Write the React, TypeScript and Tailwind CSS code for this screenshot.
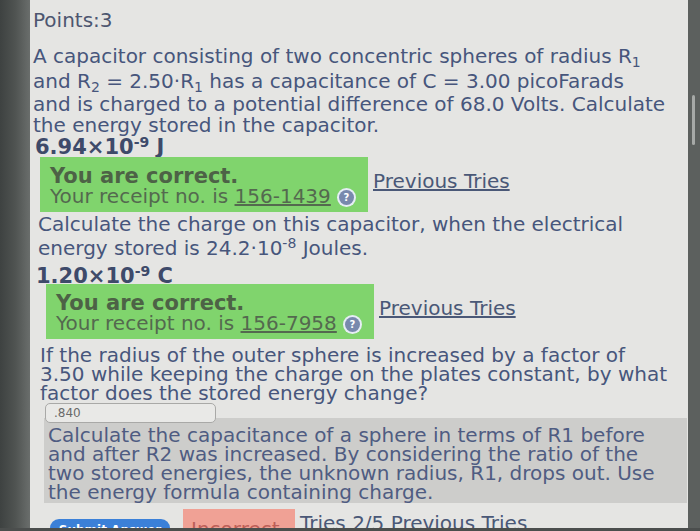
import React from 'react';

const font = { fontFamily: '"DejaVu Sans", Verdana, sans-serif' };

const Sub: React.FC<{ children: React.ReactNode }> = ({ children }) => (
  <sub className="text-[14px] leading-none">{children}</sub>
);

const Sup: React.FC<{ children: React.ReactNode }> = ({ children }) => (
  <sup className="text-[14px] leading-none">{children}</sup>
);

const HelpIcon: React.FC = () => (
  <span className="inline-flex items-center justify-center w-[15px] h-[15px] rounded-full bg-[#7889ad] ring-2 ring-[#e6edf5] text-white text-[10px] font-bold leading-none align-middle ml-[8px]">
    ?
  </span>
);

const Correct: React.FC<{ receipt: string; className: string }> = ({ receipt, className }) => (
  <div className={`flex items-start ${className}`}>
    <div className="bg-[#80d46d] pl-[10px] pt-[9px] pb-[6px] w-[328px] leading-[20px] text-[20px] whitespace-nowrap">
      <div className="font-bold text-[21px] text-[#4d6246]">You are correct.</div>
      <div className="text-[#54694f]">
        Your receipt no. is <span className="underline">{receipt}</span>
        <HelpIcon />
      </div>
    </div>
    <span className="ml-[5px] mt-[14px] underline text-[#4a5877] text-[20px] leading-[20px]">Previous Tries</span>
  </div>
);

export default function App() {
  return (
    <div className="w-[700px] h-[531px] overflow-hidden flex flex-col bg-[#474a49]" style={font}>
      <div className="h-[528px] flex">
        <div className="w-[30px] bg-gradient-to-r from-[#3e4241] via-[#4f5351] to-[#6a6e6c]" />
        <div className="w-[658px] bg-[#e5e5e3] text-[#47567c] pl-[3px] pt-[9px] flex flex-col whitespace-nowrap overflow-hidden">
          <div className="text-[20px] leading-[22px] text-[#4d5670]">Points:3</div>

          <div className="mt-[13px] text-[20px]">
            <div className="h-[25px] leading-[24px]">
              A capacitor consisting of two concentric spheres of radius R<Sub>1</Sub>
            </div>
            <div className="h-[25px] leading-[24px]">
              and R<Sub>2</Sub> = 2.50·R<Sub>1</Sub> has a capacitance of C = 3.00 picoFarads
            </div>
            <div className="h-[21px] leading-[21px]">and is charged to a potential difference of 68.0 Volts. Calculate</div>
            <div className="h-[21px] leading-[21px]">the energy stored in the capacitor.</div>
          </div>
          <div className="font-bold text-[21px] h-[22px] leading-[22px] text-[#3e4a6a] pl-[2px]">
            6.94×10<Sup>-9</Sup> J
          </div>

          <Correct receipt="156-1439" className="pl-[7px] -mt-[1px]" />

          <div className="pl-[5px] text-[20px] leading-[24px]">
            Calculate the charge on this capacitor, when the electrical
            <br />
            energy stored is 24.2·10<Sup>-8</Sup> Joules.
          </div>
          <div className="mt-[5px] font-bold text-[21px] leading-[22px] text-[#3e4a6a] pl-[3px]">
            1.20×10<Sup>-9</Sup> C
          </div>

          <Correct receipt="156-7958" className="pl-[13px] -mt-[3px]" />

          <div className="mt-[7px] pl-[7px] text-[20px] leading-[19px]">
            If the radius of the outer sphere is increased by a factor of
            <br />
            3.50 while keeping the charge on the plates constant, by what
            <br />
            factor does the stored energy change?
          </div>
          <div className="relative z-10 ml-[12px] w-[171px] h-[22px] rounded-[5px] border border-[#a9a9a7] bg-[#e9e9e7] text-[12px] text-[#6a6a6a] pl-[8px] flex items-center">
            .840
          </div>

          <div className="-mt-[5px] ml-[11px] mr-[1px] bg-[#cdcdcb] pl-[4px] pt-[8px] pb-[1px] text-[20px] leading-[19px] text-[#4f5c82]">
            Calculate the capacitance of a sphere in terms of R1 before
            <br />
            and after R2 was increased. By considering the ratio of the
            <br />
            two stored energies, the unknown radius, R1, drops out. Use
            <br />
            the energy formula containing charge.
          </div>

          <div className="flex items-start ml-[17px] mt-[6px]">
            <div className="mt-[10px] w-[120px] h-[24px] rounded-[9px] bg-[#3b80d8] text-white text-[12px] font-bold text-center pt-[4px] leading-[14px]">
              Submit Answer
            </div>
            <div className="ml-[13px] w-[112px] h-[30px] bg-[#f0a195] pl-[8px] pt-[9px] text-[20px] leading-[22px] text-[#bd5f58]">
              Incorrect.
            </div>
            <div className="ml-[5px] pt-[3px] text-[20px] leading-[22px] text-[#4a5877]">Tries 2/5 Previous Tries</div>
          </div>
        </div>
        <div className="w-[12px] bg-[#5c605e] flex">
          <div className="ml-[4px] mt-[95px] w-[3px] h-[50px] rounded-full bg-[#a6a9a7]" />
        </div>
      </div>
      <div className="h-[3px] bg-[#4b4e4d]" />
    </div>
  );
}
